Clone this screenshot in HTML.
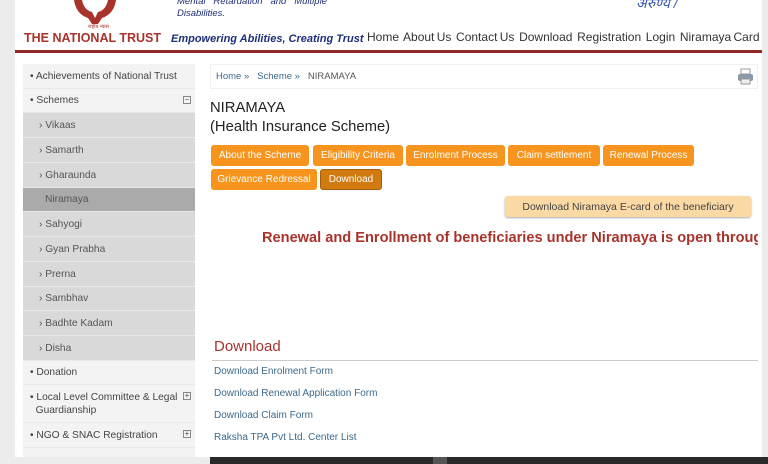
<!DOCTYPE html>
<html><head><style>
*{margin:0;padding:0;box-sizing:border-box}
body{width:768px;height:464px;overflow:hidden;background:#ececec;font-family:"Liberation Sans",sans-serif;position:relative}
.a{position:absolute}
#page{left:15px;top:0;width:747px;height:457px;background:#fff}
.nav{top:30px;font-size:12px;color:#333;left:367px;white-space:nowrap;word-spacing:-1px}
.side div{position:absolute;left:23px;width:172px;font-size:10.2px;color:#444;border-bottom:1px solid #e8e8e8;padding-left:7px;display:flex;align-items:center}
.l1{background:#f3f3f3}
.l2{background:#d9d9d9;padding-left:16px!important;color:#555!important}
.btn{position:absolute;height:21px;background:#f7941d;color:#fff;font-size:10px;border-radius:3px;display:flex;align-items:center;justify-content:center;white-space:nowrap}
.lnk{position:absolute;left:214px;font-size:10px;color:#3c6a8c}
.plus{position:absolute;left:183px;width:8px;height:8px;border:1px solid #888;font-size:8px;line-height:6px;text-align:center;color:#555}
</style></head><body>
<div class="a" id="page"></div>
<svg class="a" style="left:70px;top:0" width="50" height="26"><path d="M4 0 Q6 14 18 18 L22 24 L28 24 L32 18 Q44 14 46 0 L38 0 Q36 10 28 12 L25 18 L22 12 Q14 10 12 0Z" fill="#a8332b"/></svg>
<div class="a" style="left:88px;top:24px;font-size:5px;color:#a8332b">राष्ट्रीय न्यास</div>
<div class="a" style="left:24px;top:31px;font-size:12.5px;font-weight:bold;color:#a8332b">THE NATIONAL TRUST</div>
<div class="a" style="left:177px;top:-4px;font-size:9.5px;font-style:italic;color:#1f2f7a;line-height:12px">Mental &nbsp; Retardation &nbsp; and &nbsp; Multiple<br>Disabilities.</div>
<div class="a" style="left:171px;top:33px;font-size:11px;font-style:italic;font-weight:bold;color:#1f2f7a">Empowering Abilities, Creating Trust</div>
<div class="a" style="left:636px;top:-6px;font-size:14px;font-style:italic;color:#3a5aa8">अरुण्य /</div>
<div class="a nav">Home&nbsp; About Us&nbsp; Contact Us&nbsp; Download&nbsp; Registration&nbsp; Login&nbsp; Niramaya Card</div>
<div class="a" style="left:15px;top:50px;width:747px;height:3px;background:#8e2a25"></div>
<div class="side">
<div class="l1" style="top:64px;height:25px">• Achievements of National Trust</div>
<div class="l1" style="top:89px;height:24px">• Schemes</div>
<div class="l2" style="top:113px;height:25px">› Vikaas</div>
<div class="l2" style="top:138px;height:25px">› Samarth</div>
<div class="l2" style="top:163px;height:25px">› Gharaunda</div>
<div class="l2" style="top:188px;height:24px;background:#aaa;padding-left:22px!important">Niramaya</div>
<div class="l2" style="top:212px;height:25px">› Sahyogi</div>
<div class="l2" style="top:237px;height:25px">› Gyan Prabha</div>
<div class="l2" style="top:262px;height:25px">› Prerna</div>
<div class="l2" style="top:287px;height:24px">› Sambhav</div>
<div class="l2" style="top:311px;height:25px">› Badhte Kadam</div>
<div class="l2" style="top:336px;height:25px">› Disha</div>
<div class="l1" style="top:361px;height:24px">• Donation</div>
<div class="l1" style="top:385px;height:38px;line-height:13px">• Local Level Committee &amp; Legal<br>&nbsp;&nbsp;Guardianship</div>
<div class="l1" style="top:423px;height:25px">• NGO &amp; SNAC Registration</div>
<div class="l1" style="top:448px;height:9px;border:0"></div>
</div>
<div class="plus" style="top:96px">−</div>
<div class="plus" style="top:392px">+</div>
<div class="plus" style="top:430px">+</div>
<div class="a" style="left:210px;top:64px;width:548px;height:25px;border:1px solid #f0f0f0"></div>
<div class="a" style="left:216px;top:71px;font-size:9.5px;color:#3c6a8c">Home »&nbsp;&nbsp; Scheme »&nbsp;&nbsp; <span style="color:#555">NIRAMAYA</span></div>
<svg class="a" style="left:737px;top:68px" width="17" height="17"><rect x="4" y="1" width="9" height="5" fill="#fff" stroke="#999"/><rect x="1" y="6" width="15" height="7" rx="2" fill="#8a9aa8"/><rect x="4" y="11" width="9" height="5" fill="#eee" stroke="#999"/></svg>
<div class="a" style="left:210px;top:99px;font-size:14.8px;color:#222;line-height:19px">NIRAMAYA<br>(Health Insurance Scheme)</div>
<div class="btn" style="left:211px;top:145px;width:98px">About the Scheme</div>
<div class="btn" style="left:313px;top:145px;width:90px">Eligibility Criteria</div>
<div class="btn" style="left:406px;top:145px;width:99px">Enrolment Process</div>
<div class="btn" style="left:508px;top:145px;width:92px">Claim settlement</div>
<div class="btn" style="left:603px;top:145px;width:91px">Renewal Process</div>
<div class="btn" style="left:211px;top:169px;width:106px">Grievance Redressal</div>
<div class="btn" style="left:320px;top:169px;width:62px;background:#d07a10;border:1px solid #a85e08">Download</div>
<div class="a" style="left:505px;top:196px;width:246px;height:21px;background:#fbd9a4;border-radius:3px;box-shadow:0 1px 2px #aaa;font-size:10.5px;color:#444;display:flex;align-items:center;justify-content:center;white-space:nowrap">Download Niramaya E-card of the beneficiary</div>
<div class="a" style="left:262px;top:230px;width:496px;overflow:hidden;white-space:nowrap;font-size:14.6px;font-weight:bold;color:#a8332b">Renewal and Enrollment of beneficiaries under Niramaya is open through</div>
<div class="a" style="left:214px;top:338px;font-size:15px;color:#a8332b">Download</div>
<div class="a" style="left:212px;top:360px;width:546px;height:1px;background:#ccc"></div>
<div class="lnk" style="top:366px">Download Enrolment Form</div>
<div class="lnk" style="top:388px">Download Renewal Application Form</div>
<div class="lnk" style="top:410px">Download Claim Form</div>
<div class="lnk" style="top:432px">Raksha TPA Pvt Ltd. Center List</div>
<div class="a" style="left:210px;top:457px;width:558px;height:7px;background:#2a2a2a"></div>
<div class="a" style="left:433px;top:457px;width:14px;height:7px;background:#555"></div>
</body></html>
